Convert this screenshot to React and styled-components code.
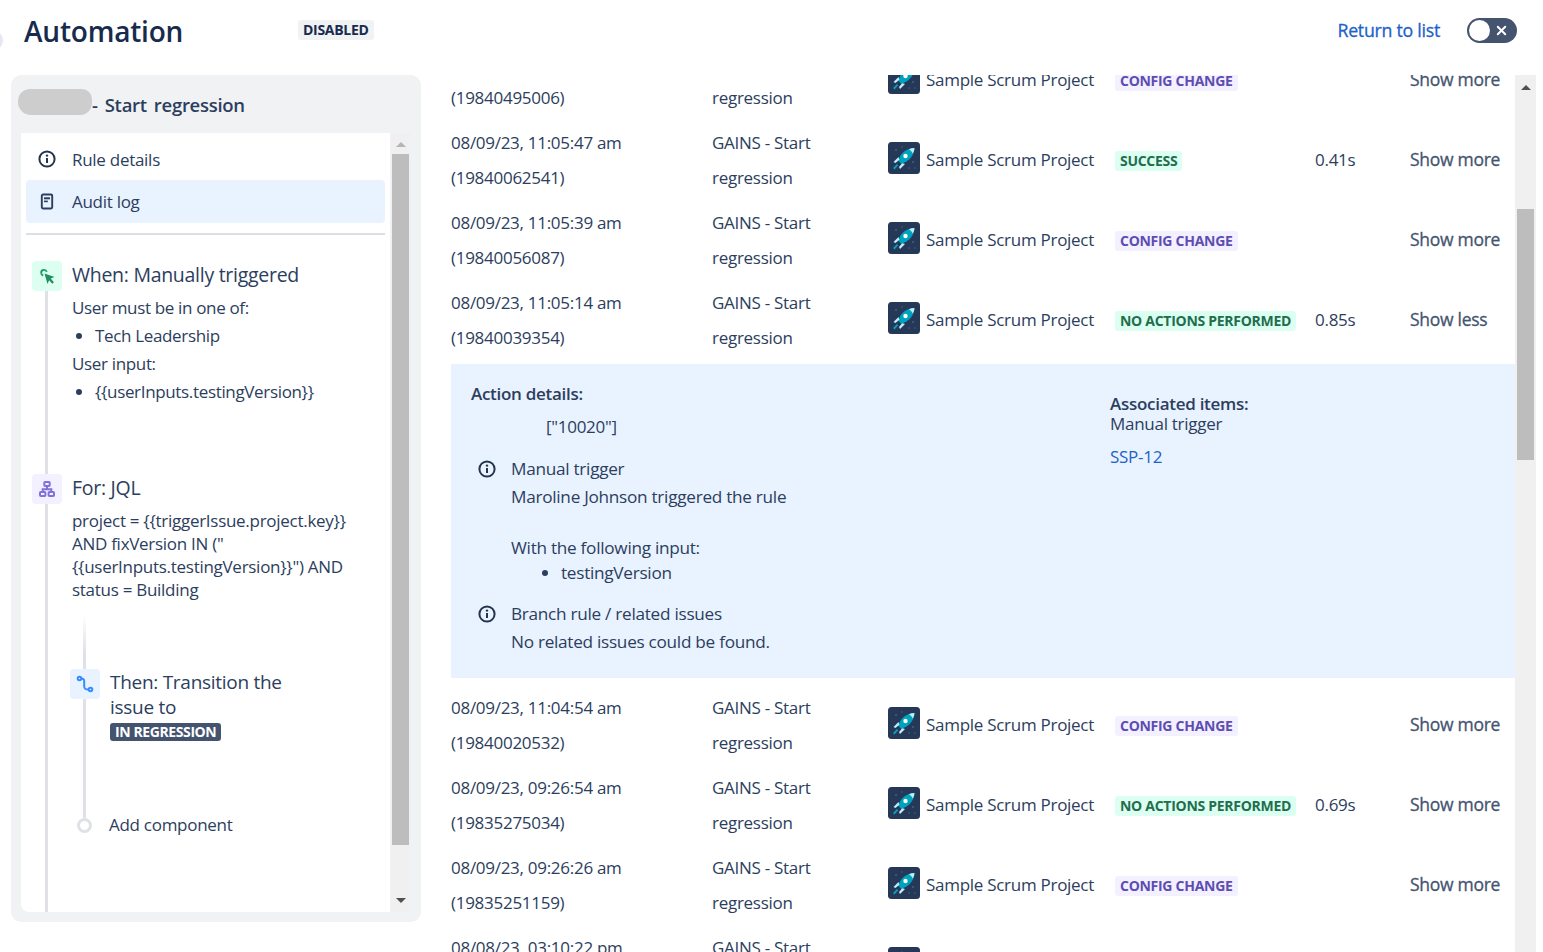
import React from 'react'
import styled, { createGlobalStyle } from 'styled-components'
import { X } from 'lucide-react'

const GlobalStyle = createGlobalStyle`
  html, body {
    margin: 0;
    height: 100%;
    overflow: hidden;
    background: #fff;
  }
  body {
    font-family: "Open Sans", "Noto Sans", sans-serif;
    font-size: 17px;
    letter-spacing: -0.28px;
    color: #2c3e5d;
  }
`

const Page = styled.div`
  position: relative;
  display: flex;
  flex-direction: column;
  height: 952px;
  overflow: hidden;
`

const AvatarEdge = styled.div`
  position: absolute;
  left: -18px;
  top: 30px;
  width: 21px;
  height: 21px;
  border-radius: 50%;
  background: #e6e6f4;
`

const Header = styled.header`
  flex: none;
  height: 75px;
  box-sizing: border-box;
  display: flex;
  align-items: flex-start;
  padding: 18px 26px 0 24px;
`

const PageTitle = styled.h1`
  margin: -6px 0 0;
  width: 274px;
  font-size: 28px;
  line-height: 38px;
  font-weight: 600;
  letter-spacing: -0.2px;
  color: #172b4d;
`

const HeaderLozenge = styled.span`
  margin-top: 2px;
  height: 20px;
  padding: 0 5px;
  border-radius: 3px;
  background: #f1f2f4;
  color: #172b4d;
  font-size: 14px;
  line-height: 20px;
  font-weight: 700;
`

const ReturnLink = styled.a`
  margin-left: auto;
  margin-top: -1px;
  font-size: 17.8px;
  line-height: 26px;
  -webkit-text-stroke: 0.3px #1d62c9;
  color: #1d62c9;
`

const Toggle = styled.div`
  margin-left: 27px;
  width: 50px;
  height: 25px;
  border-radius: 13px;
  background: #44546f;
  display: flex;
  align-items: center;
  justify-content: space-between;
  padding: 0 8px 0 2px;
  box-sizing: border-box;
  color: #fff;
`

const Knob = styled.span`
  width: 21px;
  height: 21px;
  border-radius: 50%;
  background: #fff;
`

const Main = styled.main`
  flex: 1;
  min-height: 0;
  display: flex;
  gap: 30px;
  padding: 0 7px 0 11px;
`

const Panel = styled.aside`
  flex: none;
  width: 410px;
  height: 847px;
  box-sizing: border-box;
  padding: 0 11px 10px 10px;
  border-radius: 10px;
  background: #f1f2f4;
  display: flex;
  flex-direction: column;
`

const PanelTitle = styled.div`
  flex: none;
  height: 58px;
  display: flex;
  align-items: center;
  font-size: 18.5px;
  word-spacing: 2.5px;
  font-weight: 600;
  color: #2c3e5d;
`

const Blob = styled.span`
  width: 74px;
  height: 26px;
  border-radius: 12px 10px 12px 13px;
  margin: -5px 0 0 -3px;
  background: #cdcdcd;
`

const PanelBody = styled.div`
  flex: 1;
  min-height: 0;
  display: flex;
`

const List = styled.div`
  flex: none;
  width: 369px;
  box-sizing: border-box;
  padding-top: 5px;
  background: #fff;
  border-radius: 0 0 0 8px;
  overflow: hidden;
  display: flex;
  flex-direction: column;
`

const NavItem = styled.div`
  flex: none;
  height: ${p => p.$h}px;
  margin: 0 5px;
  padding-left: 12px;
  display: flex;
  align-items: center;
  gap: 16px;
  border-radius: 4px;
  background: ${p => (p.$active ? '#e9f2ff' : 'transparent')};
`

const Divider = styled.div`
  flex: none;
  height: 2px;
  margin: 10px 5px 26px;
  background: #dcdfe4;
`

const Step = styled.section`
  flex: ${p => (p.$grow ? '1' : 'none')};
  height: ${p => (p.$grow ? 'auto' : '213px')};
  display: flex;
  gap: 10px;
  padding-left: 11px;
`

const RailCol = styled.div`
  flex: none;
  width: 30px;
  display: flex;
  flex-direction: column;
  align-items: center;
`

const IconBox = styled.div`
  flex: none;
  width: 30px;
  height: 30px;
  border-radius: 4px;
  display: flex;
  align-items: center;
  justify-content: center;
  background: ${p => p.$bg};
`

const Rail = styled.div`
  flex: 1;
  width: 3px;
  margin-right: 1px;
  background: #dfe1e6;
`

const StepMain = styled.div`
  flex: 1;
  min-width: 0;
`

const StepTitle = styled.div`
  font-size: 19.5px;
  line-height: 30px;
  margin-top: -1px;
  white-space: nowrap;
`

const Text = styled.div`
  line-height: 28px;
  white-space: nowrap;
`

const StepBody = styled.div`
  margin-top: 4px;
  letter-spacing: -0.34px;
`

const Bullets = styled.ul`
  margin: 0;
  padding-left: 23px;
  line-height: 28px;
`

const Query = styled.div`
  margin-top: 6px;
  line-height: 23px;
  white-space: nowrap;
`

const Nested = styled.div`
  margin: 14px 0 0 -2px;
`

const FadeRail = styled.div`
  width: 3px;
  height: 54px;
  margin-left: 13px;
  background: linear-gradient(#fff, #dfe1e6 70%);
`

const NestedStep = styled.div`
  height: 149px;
  display: flex;
  gap: 10px;
`

const NestedBody = styled.div`
  padding-top: 1px;
`

const NestedTitle = styled.div`
  font-size: 19px;
  line-height: 25px;
  white-space: nowrap;
`

const StatusLozenge = styled.span`
  display: block;
  width: max-content;
  margin-top: 3px;
  height: 18px;
  padding: 0 5px;
  border-radius: 3px;
  background: #44546f;
  color: #fff;
  font-size: 14px;
  line-height: 18px;
  font-weight: 700;
  letter-spacing: -0.4px;
`

const AddRow = styled.div`
  height: 15px;
  display: flex;
  align-items: center;
  gap: 10px;
`

const AddDot = styled.div`
  flex: none;
  width: 30px;
  display: flex;
  justify-content: center;
  padding-right: 1px;
  margin-right: -1px;
  box-sizing: border-box;
`

const AddLabel = styled.span`
  margin-top: -2px;
`

const Ring = styled.span`
  width: 15px;
  height: 15px;
  box-sizing: border-box;
  border-radius: 50%;
  border: 3px solid #dfe1e6;
  background: #fff;
`

const ScrollBar = styled.div`
  flex: none;
  width: ${p => p.$w}px;
  margin-left: ${p => p.$gap || 0}px;
  background: #f0f0f0;
  display: flex;
  flex-direction: column;
  align-items: center;
`

const Arrow = styled.span`
  flex: none;
  width: 0;
  height: 0;
  margin: ${p => p.$m};
  border-left: 5px solid transparent;
  border-right: 5px solid transparent;
  ${p => (p.$down
    ? `border-top: 5px solid ${p.$c};`
    : `border-bottom: 5px solid ${p.$c};`)}
`

const Thumb = styled.div`
  flex: none;
  width: 17px;
  height: ${p => p.$h}px;
  margin-top: ${p => p.$top}px;
  background: #bdbdbd;
`

const TableArea = styled.div`
  flex: 1;
  min-width: 0;
  display: flex;
  height: 877px;
  overflow: hidden;
`

const Table = styled.div`
  flex: 1;
  min-width: 0;
  overflow: hidden;
`

const Rows = styled.div`
  margin-top: -35px;
`

const Row = styled.div`
  height: 80px;
  display: grid;
  grid-template-columns: 261px 176px 227px 200px 95px 105px;
  align-items: center;
`

const TwoLine = styled.div`
  line-height: 35px;
  white-space: nowrap;
`

const Project = styled.div`
  display: flex;
  align-items: center;
  gap: 6px;
  margin-top: -4px;
  white-space: nowrap;
`

const ProjectName = styled.span`
  margin-top: 2px;
`

const Lozenge = styled.span`
  justify-self: start;
  height: 20px;
  margin-top: 2px;
  padding: 0 5px;
  border-radius: 3px;
  font-size: 14px;
  line-height: 20px;
  font-weight: 700;
  white-space: nowrap;
  background: ${p => (p.$kind === 'config' ? '#f3f0ff' : '#dcfff1')};
  color: ${p => (p.$kind === 'config' ? '#5e4db2' : '#216e4e')};
`

const Duration = styled.span`
  margin-top: -2px;
`

const ShowToggle = styled.a`
  margin-top: -3px;
  color: #44546f;
  -webkit-text-stroke: 0.3px #44546f;
  font-size: 17.5px;
  white-space: nowrap;
`

const Details = styled.div`
  height: 314px;
  margin: 4px 0 7px;
  display: flex;
  background: #e9f2ff;
`

const DetailsLeft = styled.div`
  flex: none;
  width: 639px;
  padding: 20px 0 0 20px;
`

const DetailsRight = styled.div`
  padding-top: 30px;
`

const Strong = styled.div`
  line-height: 20px;
  font-weight: 600;
`

const Value = styled.div`
  margin: 13px 0 18px 75px;
  line-height: 20px;
`

const InfoBlock = styled.div`
  display: flex;
  gap: 15px;
  margin: ${p => p.$m || 0};
  padding-left: 7px;
  font-size: 17.2px;
`

const InfoIcon = styled.div`
  flex: none;
  height: 28px;
  display: flex;
  align-items: center;
`

const Input = styled.div`
  margin-top: 24px;
  line-height: 25px;
`

const InputList = styled.ul`
  margin: 0;
  padding-left: 50px;
`

const Plain = styled.div`
  line-height: 20px;
`

const IssueLink = styled.a`
  display: block;
  margin-top: 13px;
  line-height: 20px;
  color: #1d62c9;
`

const Info = ({ size = 18, color = '#22344f' }) => (
  <svg width={size} height={size} viewBox="0 0 18 18" fill="none">
    <circle cx="9" cy="9" r="7.6" stroke={color} strokeWidth="2" />
    <rect x="8" y="8" width="2" height="5" fill={color} />
    <circle cx="9" cy="5.6" r="1.2" fill={color} />
  </svg>
)

const PageIcon = () => (
  <svg width="18" height="18" viewBox="0 0 18 18" fill="none">
    <rect x="3.800" y="1.500" width="10.400" height="14" rx="1.200" stroke="#2c3e5d" strokeWidth="1.900" />
    <rect x="6" y="4.300" width="6" height="2" fill="#2c3e5d" />
    <rect x="6" y="7.600" width="3.800" height="1.600" fill="#2c3e5d" />
  </svg>
)

const CursorIcon = () => (
  <svg width="18" height="18" viewBox="0 0 18 18" fill="none">
    <path d="M5.200 8.600C2.600 7.400 2.400 3.800 5.200 3c1.600-.4 3 .4 3.600 1.800" stroke="#22a06b" strokeWidth="1.900" fill="none" />
    <path d="M6.500 6.400l10 3.600-3.800 1.600 3.200 3.600-1.600 1.500-3.200-3.500-1.600 3.700z" fill="#1f8f60" />
  </svg>
)

const TreeIcon = () => (
  <svg width="18" height="18" viewBox="0 0 18 18" fill="none" stroke="#8270db" strokeWidth="2">
    <rect x="6.300" y="2" width="5.400" height="4" rx=".8" />
    <rect x="2" y="12" width="5.400" height="4" rx=".8" />
    <rect x="10.600" y="12" width="5.400" height="4" rx=".8" />
    <path d="M9 6v3.200M4.700 12V9.200h8.600V12" />
  </svg>
)

const RouteIcon = () => (
  <svg width="18" height="18" viewBox="0 0 18 18" fill="none" stroke="#388bff" strokeWidth="2">
    <circle cx="3.500" cy="3.500" r="1.800" />
    <circle cx="14.500" cy="14.500" r="1.800" />
    <path d="M5.300 3.500c2.700 0 2.900 1.200 2.900 3.200v4.600c0 2.200.6 3.200 4.500 3.200" />
  </svg>
)

const Rocket = () => (
  <svg width="32" height="32" viewBox="0 0 32 32" style={{ flex: 'none' }}>
    <rect width="32" height="32" rx="3.500" fill="#253858" />
    <g fill="#4a5d7e">
      <circle cx="8" cy="8" r="1" />
      <circle cx="14" cy="5" r=".8" />
      <circle cx="25" cy="20" r="1" />
      <circle cx="21" cy="26" r=".8" />
      <circle cx="27" cy="26" r=".8" />
    </g>
    <path d="M26.500 6c-6 .3-11 3-14 7.500l-2.400 5 3.400 3.400 5-2.400c4.800-3 7.700-8 8-13.500z" fill="#00a3bf" />
    <path d="M26.500 6c-2 .1-3.800.5-5.600 1.200 1.500.9 3 2.400 4 4.200 1-1.700 1.500-3.500 1.600-5.400z" fill="#c1eef6" />
    <circle cx="17.500" cy="14" r="2.200" fill="#fff" />
    <path d="M5.500 20l5-5 .8 2.800-3.800 3.200zM12 27l5-5-2.800-.8-3.200 3.800z" fill="#c1eef6" />
    <path d="M5 26l4-4 1.200 1.200-3.700 4.300z" fill="#00a3bf" />
  </svg>
)

const rows = [
  { date: '08/09/23, 11:05:52 am', id: '19840495006', kind: 'config', status: 'CONFIG CHANGE' },
  { date: '08/09/23, 11:05:47 am', id: '19840062541', kind: 'ok', status: 'SUCCESS', time: '0.41s' },
  { date: '08/09/23, 11:05:39 am', id: '19840056087', kind: 'config', status: 'CONFIG CHANGE' },
  { date: '08/09/23, 11:05:14 am', id: '19840039354', kind: 'ok', status: 'NO ACTIONS PERFORMED', time: '0.85s', open: true },
  { date: '08/09/23, 11:04:54 am', id: '19840020532', kind: 'config', status: 'CONFIG CHANGE' },
  { date: '08/09/23, 09:26:54 am', id: '19835275034', kind: 'ok', status: 'NO ACTIONS PERFORMED', time: '0.69s' },
  { date: '08/09/23, 09:26:26 am', id: '19835251159', kind: 'config', status: 'CONFIG CHANGE' },
  { date: '08/08/23, 03:10:22 pm', id: '19790412276', kind: 'config', status: 'CONFIG CHANGE' },
]

const ActionDetails = () => (
  <Details>
    <DetailsLeft>
      <Strong>Action details:</Strong>
      <Value>["10020"]</Value>
      <InfoBlock>
        <InfoIcon><Info /></InfoIcon>
        <div>
          <Text>Manual trigger</Text>
          <Text>Maroline Johnson triggered the rule</Text>
          <Input>
            With the following input:
            <InputList>
              <li>testingVersion</li>
            </InputList>
          </Input>
        </div>
      </InfoBlock>
      <InfoBlock $m="15px 0 0">
        <InfoIcon><Info /></InfoIcon>
        <div>
          <Text>Branch rule / related issues</Text>
          <Text>No related issues could be found.</Text>
        </div>
      </InfoBlock>
    </DetailsLeft>
    <DetailsRight>
      <Strong>Associated items:</Strong>
      <Plain>Manual trigger</Plain>
      <IssueLink>SSP-12</IssueLink>
    </DetailsRight>
  </Details>
)

const App = () => {
  return (
    <Page>
      <GlobalStyle />
      <AvatarEdge />
      <Header>
        <PageTitle>Automation</PageTitle>
        <HeaderLozenge>DISABLED</HeaderLozenge>
        <ReturnLink>Return to list</ReturnLink>
        <Toggle>
          <Knob />
          <X size={15} strokeWidth={3} />
        </Toggle>
      </Header>
      <Main>
        <Panel>
          <PanelTitle>
            <Blob />
            <span>- Start regression</span>
          </PanelTitle>
          <PanelBody>
            <List>
              <NavItem $h={42}><Info />Rule details</NavItem>
              <NavItem $h={43} $active><PageIcon />Audit log</NavItem>
              <Divider />
              <Step>
                <RailCol>
                  <IconBox $bg="#dcfff1"><CursorIcon /></IconBox>
                  <Rail />
                </RailCol>
                <StepMain>
                  <StepTitle>When: Manually triggered</StepTitle>
                  <StepBody>
                    <Text>User must be in one of:</Text>
                    <Bullets><li>Tech Leadership</li></Bullets>
                    <Text>User input:</Text>
                    <Bullets><li>{'{{userInputs.testingVersion}}'}</li></Bullets>
                  </StepBody>
                </StepMain>
              </Step>
              <Step $grow>
                <RailCol>
                  <IconBox $bg="#f3f0ff"><TreeIcon /></IconBox>
                  <Rail />
                </RailCol>
                <StepMain>
                  <StepTitle>For: JQL</StepTitle>
                  <Query>
                    {'project = {{triggerIssue.project.key}}'}<br />
                    {'AND fixVersion IN ("'}<br />
                    {'{{userInputs.testingVersion}}") AND'}<br />
                    status = Building
                  </Query>
                  <Nested>
                    <FadeRail />
                    <NestedStep>
                      <RailCol>
                        <IconBox $bg="#e9f2ff"><RouteIcon /></IconBox>
                        <Rail />
                      </RailCol>
                      <NestedBody>
                        <NestedTitle>Then: Transition the<br />issue to</NestedTitle>
                        <StatusLozenge>IN REGRESSION</StatusLozenge>
                      </NestedBody>
                    </NestedStep>
                    <AddRow>
                      <AddDot><Ring /></AddDot>
                      <AddLabel>Add component</AddLabel>
                    </AddRow>
                  </Nested>
                </StepMain>
              </Step>
            </List>
            <ScrollBar $w={19} $gap={1}>
              <Arrow $c="#b5b5b5" $m="9px 0 7px" />
              <Thumb $top={0} $h={691} />
              <Arrow $down $c="#505050" $m="53px 0 0" />
            </ScrollBar>
          </PanelBody>
        </Panel>
        <TableArea>
          <Table>
            <Rows>
              {rows.map(r => (
                <React.Fragment key={r.id}>
                  <Row>
                    <TwoLine>{r.date}<br />({r.id})</TwoLine>
                    <TwoLine>GAINS - Start<br />regression</TwoLine>
                    <Project><Rocket /><ProjectName>Sample Scrum Project</ProjectName></Project>
                    <Lozenge $kind={r.kind}>{r.status}</Lozenge>
                    <Duration>{r.time}</Duration>
                    <ShowToggle>{r.open ? 'Show less' : 'Show more'}</ShowToggle>
                  </Row>
                  {r.open && <ActionDetails />}
                </React.Fragment>
              ))}
            </Rows>
          </Table>
          <ScrollBar $w={21}>
            <Arrow $c="#505050" $m="10px 0 0" />
            <Thumb $top={119} $h={251} />
          </ScrollBar>
        </TableArea>
      </Main>
    </Page>
  )
}

export default App
